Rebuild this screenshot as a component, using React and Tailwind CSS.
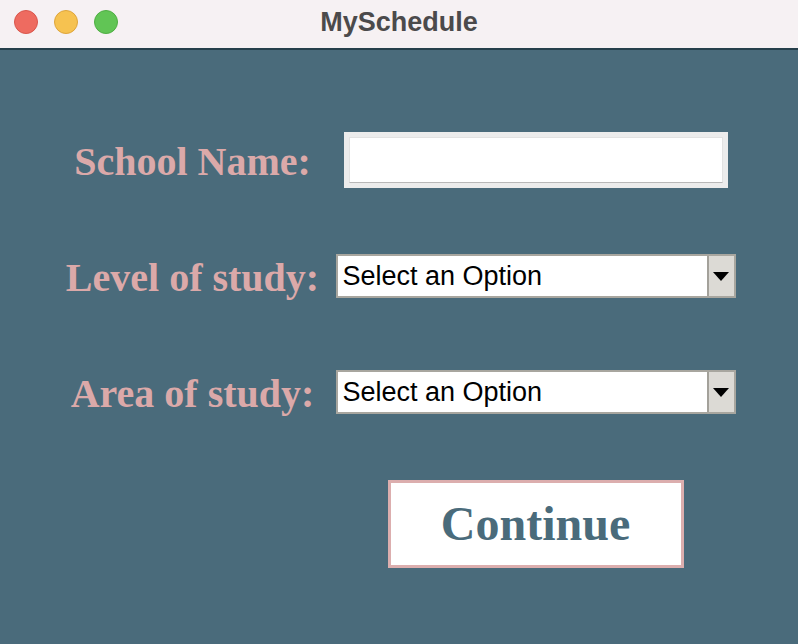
import { useState } from 'react';

const serif = { fontFamily: '"Liberation Serif", "Times New Roman", serif' };
const sans = { fontFamily: '"Liberation Sans", Arial, sans-serif' };

function Label({ children }) {
  return (
    <div
      className="w-[261px] shrink-0 text-center text-[40px] font-bold leading-none text-[#dba9a9] pt-[4px]"
      style={serif}
    >
      {children}
    </div>
  );
}

function Combo({ value }) {
  return (
    <div className="flex h-[44px] w-[400px] border-2 border-[#a8a69f] bg-white">
      <div className="flex flex-1 items-center pl-[5px] text-[27px] text-black" style={sans}>
        {value}
      </div>
      <div className="flex w-[27px] items-center justify-center border-l-2 border-[#a3a19a] bg-[#dcdad5]">
        <svg width="16" height="9" viewBox="0 0 16 9">
          <path d="M0 0H16L8 9Z" fill="#000" />
        </svg>
      </div>
    </div>
  );
}

export default function App() {
  const [school, setSchool] = useState('');

  return (
    <div className="flex h-[644px] w-[798px] flex-col overflow-hidden bg-[#4a6b7b]">
      {/* title bar */}
      <div className="grid h-[50px] shrink-0 grid-cols-[1fr_auto_1fr] items-center border-b-2 border-[#263f4b] bg-[#f6f1f3] pb-[4px]">
        <div className="flex items-center gap-[16px] pl-[14px]">
          <span className="h-[24px] w-[24px] rounded-full border border-[#d9564c] bg-[#ee6b60]" />
          <span className="h-[24px] w-[24px] rounded-full border border-[#dea53b] bg-[#f6c250]" />
          <span className="h-[24px] w-[24px] rounded-full border border-[#4fae43] bg-[#61c555]" />
        </div>
        <div className="text-[27px] font-bold text-[#4b4a4b]" style={sans}>
          MySchedule
        </div>
        <div />
      </div>

      {/* form */}
      <div className="flex flex-col pl-[62px] pt-[52px]">
        <div className="flex h-[116px] items-center">
          <Label>School Name:</Label>
          <div className="flex w-[416px] justify-center pl-[9px]">
            <div className="w-[384px] bg-[#ececec] p-[5px]">
              <input
                value={school}
                onChange={(e) => setSchool(e.target.value)}
                className="block h-[46px] w-full border border-[#e2e2e2] border-b-[#b8b8b8] bg-white px-2 text-[24px] outline-none"
                style={sans}
              />
            </div>
          </div>
        </div>

        <div className="flex h-[116px] items-center">
          <Label>Level of study:</Label>
          <div className="flex w-[416px] justify-center pl-[9px]">
            <Combo value="Select an Option" />
          </div>
        </div>

        <div className="flex h-[116px] items-center">
          <Label>Area of study:</Label>
          <div className="flex w-[416px] justify-center pl-[9px]">
            <Combo value="Select an Option" />
          </div>
        </div>

        <div className="flex h-[148px] items-center">
          <div className="w-[261px] shrink-0" />
          <div className="flex w-[416px] justify-center pl-[9px]">
            <button
              className="h-[88px] w-[296px] border-[3px] border-[#dcaeae] bg-white text-[48px] font-bold leading-none text-[#4a6b7b]"
              style={serif}
            >
              Continue
            </button>
          </div>
        </div>
      </div>
    </div>
  );
}
